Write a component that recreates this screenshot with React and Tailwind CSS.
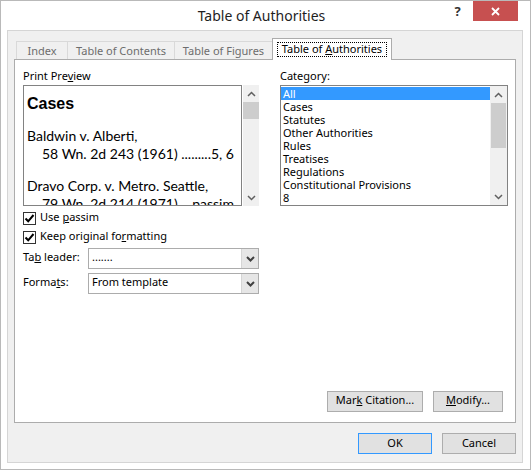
import React from 'react';

const categories = [
  'All',
  'Cases',
  'Statutes',
  'Other Authorities',
  'Rules',
  'Treatises',
  'Regulations',
  'Constitutional Provisions',
  '8',
];

const ArrowUp = () => (
  <svg width="9" height="6" viewBox="0 0 9 6">
    <path d="M1 5L4.5 1.5L8 5" fill="none" stroke="#606060" strokeWidth="1.5" />
  </svg>
);

const ArrowDown = () => (
  <svg width="9" height="6" viewBox="0 0 9 6">
    <path d="M1 1L4.5 4.5L8 1" fill="none" stroke="#606060" strokeWidth="1.5" />
  </svg>
);

const ComboArrow = () => (
  <svg width="9" height="6" viewBox="0 0 9 6">
    <path d="M1 1L4.5 4.5L8 1" fill="none" stroke="#404040" strokeWidth="2" />
  </svg>
);

const Check = () => (
  <svg width="11" height="11" viewBox="0 0 11 11">
    <path d="M1.5 5.5L4.2 8.3L9.5 2" fill="none" stroke="#000" strokeWidth="2" />
  </svg>
);

const Checkbox = ({ children, className }) => (
  <div className={`flex items-start ${className}`}>
    <span className="flex h-[13px] w-[13px] items-center justify-center border border-[#333] bg-white">
      <Check />
    </span>
    <span className="-mt-[2px] ml-[4px] leading-[13px]">{children}</span>
  </div>
);

const Combo = ({ label, value, className }) => (
  <div className={`flex items-start ${className}`}>
    <span className="w-[65px] leading-[17px]">{label}</span>
    <div className="flex h-[21px] w-[171px] border border-[#acacac] bg-white">
      <span className="flex-1 pl-[3px] leading-[15px]">{value}</span>
      <span className="flex w-[17px] items-center justify-center border-l border-[#d5d5d5] bg-[#e6e6e6]">
        <ComboArrow />
      </span>
    </div>
  </div>
);

// citation line with a dot leader running up to the page reference
const Leader = ({ cite, dots, page }) => (
  <div className="flex whitespace-nowrap pl-[15px]">
    <span>{cite}&nbsp;</span>
    <span className="flex min-w-0 flex-1 justify-end overflow-hidden">{dots}</span>
    <span>{page}</span>
  </div>
);

const Button = ({ children, className }) => (
  <div className={`flex h-[21px] justify-center border bg-[#e1e1e1] leading-[15px] ${className}`}>
    {children}
  </div>
);

export default function App() {
  return (
    <div className="flex h-[470px] w-[531px] flex-col border border-[#b9b9b9] bg-white text-[11px] text-black [font-family:'Noto_Sans','Segoe_UI',sans-serif]">
      {/* title bar */}
      <div className="relative flex h-[29px] justify-center pr-[8px]">
        <span className="text-[14px] leading-[29px] text-[#1e1e1e]">Table of Authorities</span>
        <div className="absolute right-[12px] top-0 flex">
          <span className="mr-[5px] w-[21px] text-center text-[13px] font-bold leading-[20px] text-[#333]">?</span>
          <span className="flex h-[20px] w-[45px] items-center justify-center bg-[#c75050]">
            <svg width="9" height="9" viewBox="0 0 9 9">
              <path d="M1 1L8 8M8 1L1 8" stroke="#fff" strokeWidth="1.8" />
            </svg>
          </span>
        </div>
      </div>

      {/* client area */}
      <div className="ml-[6px] flex h-[433px] w-[516px] flex-col border border-[#d5d5d5] bg-[#f0f0f0]">
        <div className="ml-[8px] mt-[7px] flex h-[21px] items-end">
          <div className="h-[18px] w-[51px] border-l border-t border-[#d9d9d9] text-center leading-[17px] text-[#6d6d6d]">Index</div>
          <div className="h-[18px] w-[107px] border-l border-t border-[#d9d9d9] text-center leading-[17px] text-[#6d6d6d]">Table of Contents</div>
          <div className="h-[18px] w-[98px] border-l border-t border-[#d9d9d9] text-center leading-[17px] text-[#6d6d6d]">Table of Figures</div>
          <div className="relative z-10 -mb-px flex h-[22px] w-[120px] justify-center border border-b-0 border-[#acacac] bg-white pt-[3px]">
            <span className="h-[15px] border border-dotted border-black px-[4px] pb-[2px] pt-px leading-[10px]">
              Table of <u>A</u>uthorities
            </span>
          </div>
        </div>

        <div className="ml-[6px] flex h-[364px] w-[502px] flex-col border border-[#acacac] bg-white">
          <div className="flex pl-[8px] pt-[9px]">
            {/* left column */}
            <div className="flex w-[236px] flex-col">
              <div className="h-[16px] leading-[14px]">
                Print Pre<u>v</u>iew
              </div>
              <div className="flex">
                <div className="h-[121px] w-[219px] overflow-hidden border border-[#828282] pl-[3px] pr-[7px] text-[14px] leading-[18.5px] [font-family:Lato,Calibri,sans-serif]">
                  <div className="mt-[9px] text-[16px] font-bold leading-[18px] [font-family:'Liberation_Sans',Arial,sans-serif]">Cases</div>
                  <div className="mt-[13.5px]">Baldwin v. Alberti,</div>
                  <Leader cite="58 Wn. 2d 243 (1961)" dots="........." page="5, 6" />
                  <div className="mt-[13px]">Dravo Corp. v. Metro. Seattle,</div>
                  <Leader cite="79 Wn. 2d 214 (1971)" dots="......" page="passim" />
                </div>
                <div className="ml-px flex h-[121px] w-[16px] flex-col bg-[#f0f0f0]">
                  <span className="flex h-[17px] items-center justify-center"><ArrowUp /></span>
                  <span className="h-[17px] bg-[#cdcdcd]" />
                  <span className="flex-1" />
                  <span className="flex h-[17px] items-center justify-center"><ArrowDown /></span>
                </div>
              </div>
              <Checkbox className="mt-[6px]">Use <u>p</u>assim</Checkbox>
              <Checkbox className="mt-[6px]">Keep original fo<u>r</u>matting</Checkbox>
              <Combo className="mt-[4px]" label={<>Ta<u>b</u> leader:</>} value="......." />
              <Combo className="mt-[4px]" label={<>Forma<u>t</u>s:</>} value="From template" />
            </div>

            {/* right column */}
            <div className="ml-[21px] flex w-[228px] flex-col">
              <div className="h-[16px] leading-[14px]">
                Cate<u>g</u>ory:
              </div>
              <div className="flex h-[121px] border border-[#828282] bg-white">
                <div className="flex-1 pt-px">
                  {categories.map((c, i) => (
                    <div
                      key={c}
                      className={`h-[13px] pl-[2px] leading-[13px] ${i === 0 ? 'bg-[#3399ff] text-white' : ''}`}
                    >
                      {c}
                    </div>
                  ))}
                </div>
                <div className="flex w-[17px] flex-col bg-[#f0f0f0]">
                  <span className="flex h-[17px] items-center justify-center"><ArrowUp /></span>
                  <span className="mx-px h-[45px] bg-[#cdcdcd]" />
                  <span className="flex-1" />
                  <span className="flex h-[17px] items-center justify-center"><ArrowDown /></span>
                </div>
              </div>
            </div>
          </div>

          <div className="mt-auto flex justify-end gap-[10px] pb-[10px] pr-[12px]">
            <Button className="w-[96px] border-[#adadad]">Mar<u>k</u>&nbsp;Citation...</Button>
            <Button className="w-[70px] border-[#adadad]"><span><u>M</u>odify...</span></Button>
          </div>
        </div>

        <div className="mt-[10px] flex justify-end gap-[10px] pr-[6px]">
          <div className="flex h-[21px] w-[74px] justify-center border border-[#3399ff] bg-[#e1e1e1] leading-[17px]">OK</div>
          <div className="flex h-[21px] w-[74px] justify-center border border-[#adadad] bg-[#e1e1e1] leading-[17px]">Cancel</div>
        </div>
      </div>
    </div>
  );
}
